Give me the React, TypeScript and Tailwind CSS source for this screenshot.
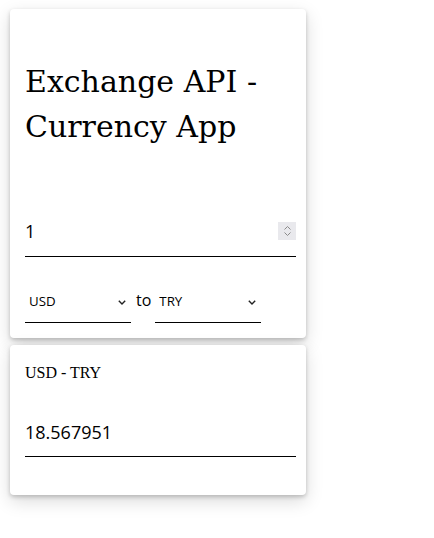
import React from "react";

function Chevron() {
  return (
    <svg width="8" height="5" viewBox="0 0 8 5" className="shrink-0">
      <path d="M0.8 0.8 L4 4 L7.2 0.8" fill="none" stroke="#222" strokeWidth="1.4" />
    </svg>
  );
}

function Select({ value }: { value: string }) {
  return (
    <div className="flex h-[41px] w-[106px] items-center justify-between border-b border-black pl-[4px] pr-[5px] text-[13.3px] text-black font-['Open_Sans',sans-serif]">
      <span>{value}</span>
      <Chevron />
    </div>
  );
}

const card =
  "w-[296px] rounded-[4px] bg-white pl-[15px] pr-[10px] shadow-[0_2px_4px_rgba(0,0,0,0.2),0_6px_18px_rgba(0,0,0,0.15)]";

export default function App() {
  return (
    <div className="min-h-[538px] w-[434px] bg-white pl-[10px] pt-[9px]">
      <div className={`${card} pb-[15px] pt-[50px]`}>
        <h1 className="m-0 text-[30px] leading-[45px] text-black font-['DejaVu_Serif',serif]">
          Exchange API -<br />Currency App
        </h1>
        <div className="mt-[57px] flex h-[51px] items-center border-b border-black">
          <span className="flex-1 text-[18px] text-black font-['Open_Sans',sans-serif]">1</span>
          <div className="flex h-[18px] w-[18px] flex-col items-center justify-center gap-[2px] bg-[#e9e9ed]">
            <svg width="7" height="4" viewBox="0 0 7 4">
              <path d="M0.5 3.5 L3.5 0.5 L6.5 3.5" fill="none" stroke="#8a8a8a" strokeWidth="1" />
            </svg>
            <svg width="7" height="4" viewBox="0 0 7 4">
              <path d="M0.5 0.5 L3.5 3.5 L6.5 0.5" fill="none" stroke="#8a8a8a" strokeWidth="1" />
            </svg>
          </div>
        </div>
        <div className="mt-[25px] flex items-baseline font-['Open_Sans',sans-serif]">
          <Select value="USD" />
          <span className="ml-[5px] mr-[4px] text-[16px] text-black">to</span>
          <Select value="TRY" />
        </div>
      </div>
      <div className={`${card} mt-[7px] pb-[38px] pt-[19px]`}>
        <div className="text-[16px] leading-[18px] text-black font-['Liberation_Serif',serif]">USD - TRY</div>
        <div className="mt-[38px] border-b border-black pb-[12px] text-[18px] leading-[24px] text-black font-['Open_Sans',sans-serif]">
          18.567951
        </div>
      </div>
    </div>
  );
}
